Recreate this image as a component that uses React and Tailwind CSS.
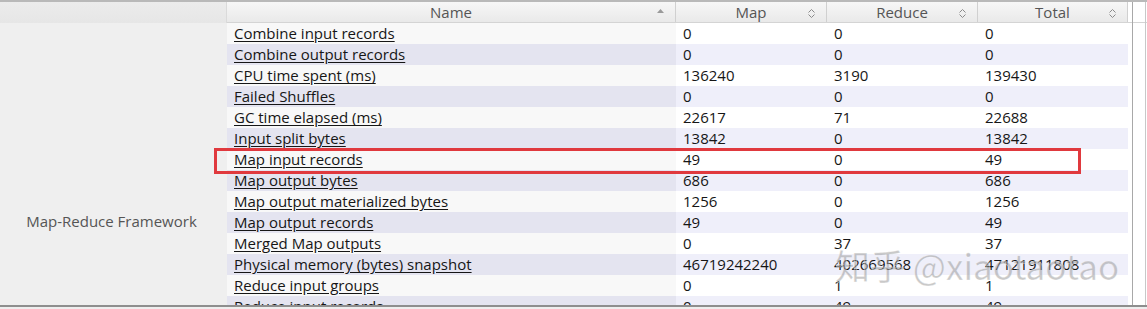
import React from "react";

const rows = [
  ["Combine input records", "0", "0", "0"],
  ["Combine output records", "0", "0", "0"],
  ["CPU time spent (ms)", "136240", "3190", "139430"],
  ["Failed Shuffles", "0", "0", "0"],
  ["GC time elapsed (ms)", "22617", "71", "22688"],
  ["Input split bytes", "13842", "0", "13842"],
  ["Map input records", "49", "0", "49"],
  ["Map output bytes", "686", "0", "686"],
  ["Map output materialized bytes", "1256", "0", "1256"],
  ["Map output records", "49", "0", "49"],
  ["Merged Map outputs", "0", "37", "37"],
  ["Physical memory (bytes) snapshot", "46719242240", "402669568", "47121911808"],
  ["Reduce input groups", "0", "1", "1"],
  ["Reduce input records", "0", "49", "49"],
];

function UpDown() {
  return (
    <svg width="9" height="11" viewBox="0 0 9 11" className="shrink-0">
      <path d="M1.5 4.5 L4.5 1.5 L7.5 4.5" fill="none" stroke="#8a8a8a" strokeWidth="1" />
      <path d="M1.5 6.5 L4.5 9.5 L7.5 6.5" fill="none" stroke="#8a8a8a" strokeWidth="1" />
    </svg>
  );
}

function Up() {
  return (
    <svg width="9" height="6" viewBox="0 0 9 6" className="shrink-0">
      <path d="M1 5 L4.5 1 L8 5 Z" fill="#9a9a9a" />
    </svg>
  );
}

function HeadCell({ label, w, icon }) {
  return (
    <div
      className={`${w} relative h-full flex items-center justify-center border-r border-[#d0d0d0] bg-gradient-to-b from-[#f7f7f7] to-[#e9e9e9] text-[#555]`}
    >
      <span>{label}</span>
      <span className="absolute right-[10px] top-[6px] flex">{icon}</span>
    </div>
  );
}

export default function App() {
  return (
    <div
      className="relative w-[1147px] h-[309px] overflow-hidden bg-[#efefef] border-t-2 border-[#b9b9b9] text-[15px] leading-[21px]"
      style={{ fontFamily: '"Open Sans", "Noto Sans", sans-serif' }}
    >
      <div className="flex h-[303px]">
        <div className="w-[227px] shrink-0 flex flex-col">
          <div className="h-[21px] bg-gradient-to-b from-[#ececec] to-[#e6e6e6] border-r border-[#dadada]" />
          <div className="flex-1 flex flex-col items-center pt-[188px] pr-[4px] text-[#555]">
            Map-Reduce Framework
          </div>
        </div>
        <div className="flex-1 flex flex-col bg-white">
          <div className="flex h-[21px] border-b border-[#d4d4d4]">
            <HeadCell label="Name" w="w-[449px]" icon={<Up />} />
            <HeadCell label="Map" w="w-[151px]" icon={<UpDown />} />
            <HeadCell label="Reduce" w="w-[151px]" icon={<UpDown />} />
            <HeadCell label="Total" w="w-[150px]" icon={<UpDown />} />
            <div className="flex-1 bg-white" />
          </div>
          {rows.map((r, i) => {
            const even = i % 2 === 1;
            return (
              <div key={r[0]} className="flex h-[21px] shrink-0 text-[#161616]">
                <div
                  className={`w-[449px] pl-[7px] ${even ? "bg-[#e4e4f0]" : "bg-[#f8f8f8]"}`}
                >
                  <span className="underline underline-offset-2">{r[0]}</span>
                </div>
                <div className={`w-[151px] pl-[7px] ${even ? "bg-[#efeffa]" : "bg-white"}`}>{r[1]}</div>
                <div className={`w-[151px] pl-[7px] ${even ? "bg-[#efeffa]" : "bg-white"}`}>{r[2]}</div>
                <div className={`w-[150px] pl-[7px] ${even ? "bg-[#efeffa]" : "bg-white"}`}>{r[3]}</div>
                <div className="flex-1 bg-white" />
              </div>
            );
          })}
        </div>
      </div>
      <div className="absolute top-0 bottom-0 left-[1132px] w-px bg-[#a8a8a8]" />
      <div className="absolute top-0 bottom-0 left-[1145px] w-px bg-[#c8c8c8]" />
      <div className="absolute left-0 right-0 top-[303px] h-[2px] bg-[#8e8e8e]" />
      <div className="absolute left-0 right-0 top-[305px] h-[4px] bg-[#eeeeee]" />
      <div className="absolute left-[214px] top-[146px] w-[867px] h-[26px] border-[3px] border-[#e0393e]" />
      <div
        className="absolute left-[835px] top-[243px] text-[35px] leading-[40px] text-[#9a9a9a]/55 whitespace-nowrap"
        style={{ fontFamily: '"Noto Sans CJK SC", "Open Sans", sans-serif', WebkitTextStroke: "0.5px rgba(255,255,255,0.6)" }}
      >
        知乎 @xiaotaotao
      </div>
    </div>
  );
}
